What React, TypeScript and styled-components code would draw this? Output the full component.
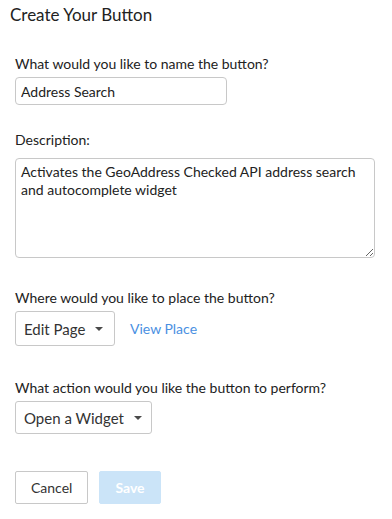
import React from 'react';
import styled, { createGlobalStyle } from 'styled-components';

const GlobalStyle = createGlobalStyle`
  * {
    box-sizing: border-box;
  }

  body {
    margin: 0;
    padding: 0;
    background: #ffffff;
    font-family: Lato, "Liberation Sans", sans-serif;
    color: #222222;
  }
`;

const Page = styled.div`
  display: flex;
  flex-direction: column;
  padding: 4px 15px 0 15px;
  width: 392px;
`;

const Title = styled.h1`
  font-size: 17px;
  font-weight: 400;
  color: #222;
  margin: 0 0 0 -5px;
  line-height: 22px;
`;

const Field = styled.div<{ $top: number }>`
  display: flex;
  flex-direction: column;
  margin-top: ${(p) => p.$top}px;
`;

const Label = styled.label<{ $gap?: number }>`
  font-size: 14px;
  line-height: 17px;
  color: #222;
  margin-bottom: ${(p) => p.$gap ?? 5}px;
`;

const TextInput = styled.input`
  width: 212px;
  height: 28px;
  border: 1px solid #c8c8c8;
  border-radius: 4px;
  padding: 0 5px;
  font-family: inherit;
  font-size: 14px;
  color: #222;
  outline: none;
`;

const TextArea = styled.textarea`
  display: block;
  width: 360px;
  height: 100px;
  border: 1px solid #c8c8c8;
  border-radius: 4px;
  padding: 4px 5px;
  font-family: inherit;
  font-size: 14px;
  line-height: 18px;
  color: #222;
  outline: none;
  resize: both;
`;

const Row = styled.div`
  display: flex;
  align-items: center;
  gap: 15px;
`;

const Select = styled.button<{ $width: number; $height: number }>`
  display: flex;
  align-items: center;
  gap: 10px;
  width: ${(p) => p.$width}px;
  height: ${(p) => p.$height}px;
  padding: 0 0 0 8px;
  background: #fff;
  border: 1px solid #c8c8c8;
  border-radius: 3px;
  font-family: inherit;
  font-size: 15px;
  color: #333;
  cursor: pointer;
`;

const Caret = styled.span`
  width: 0;
  height: 0;
  border-left: 4px solid transparent;
  border-right: 4px solid transparent;
  border-top: 4px solid #4a4a4a;
`;

const Link = styled.a`
  font-size: 14px;
  color: #4a90e2;
  text-decoration: none;
`;

const Actions = styled.div`
  display: flex;
  gap: 11px;
  margin-top: 37px;
`;

const Button = styled.button<{ $primary?: boolean }>`
  height: 33px;
  padding: 0 15px;
  font-family: inherit;
  font-size: 14px;
  border-radius: 2px;
  cursor: pointer;
  border: 1px solid ${(p) => (p.$primary ? '#cbe4f8' : '#c8c8c8')};
  background: ${(p) => (p.$primary ? '#cbe4f8' : '#fff')};
  color: ${(p) => (p.$primary ? '#fff' : '#333')};
  font-weight: ${(p) => (p.$primary ? 700 : 400)};
`;

export default function App() {
  return (
    <>
      <GlobalStyle />
      <Page>
        <Title>Create Your Button</Title>

        <Field $top={29}>
          <Label>What would you like to name the button?</Label>
          <TextInput defaultValue="Address Search" />
        </Field>

        <Field $top={26}>
          <Label $gap={10}>Description:</Label>
          <TextArea defaultValue="Activates the GeoAddress Checked API address search and autocomplete widget" />
        </Field>

        <Field $top={31}>
          <Label>Where would you like to place the button?</Label>
          <Row>
            <Select $width={100} $height={35}>
              Edit Page <Caret />
            </Select>
            <Link href="#">View Place</Link>
          </Row>
        </Field>

        <Field $top={33}>
          <Label>What action would you like the button to perform?</Label>
          <Select $width={137} $height={33}>
            Open a Widget <Caret />
          </Select>
        </Field>

        <Actions>
          <Button>Cancel</Button>
          <Button $primary>Save</Button>
        </Actions>
      </Page>
    </>
  );
}
